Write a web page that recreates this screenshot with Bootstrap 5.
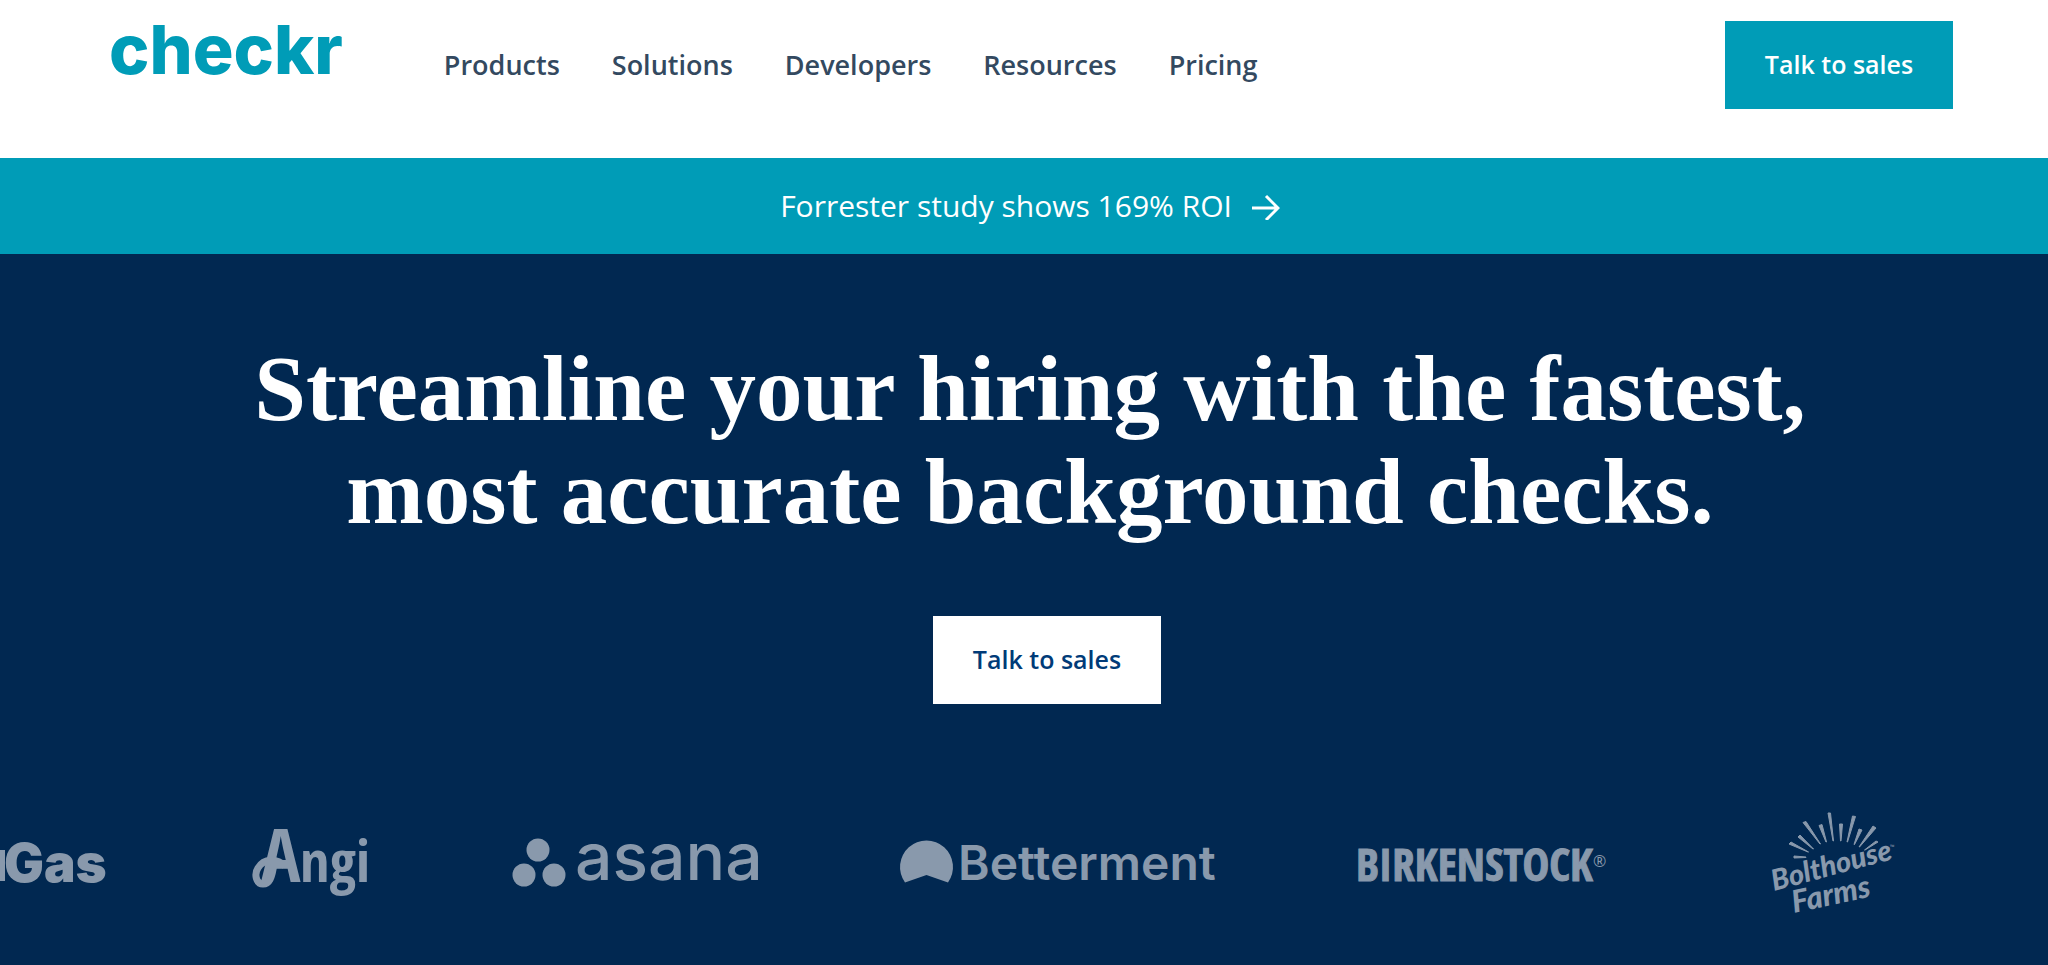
<!DOCTYPE html>
<html lang="en">
<head>
<meta charset="utf-8">
<meta name="viewport" content="width=device-width, initial-scale=1">
<title>Checkr</title>
<link rel="stylesheet" href="https://cdn.jsdelivr.net/npm/bootstrap@5.3.0/dist/css/bootstrap.min.css">
<style>
  :root { --teal: #009cb7; --navy: #012851; --ink: #334960; --haze: #8999ac; }
  body { font-family: "Open Sans", "Noto Sans", sans-serif; background: var(--navy); }
  .site-header { padding: 21px 95px 49px 109px; }
  .brand-word { font: 800 68px/56px Inter, sans-serif; color: var(--teal); margin-right: 101px; }
  .main-links { gap: 52px; }
  .main-links .nav-link { font-size: 27px; font-weight: 600; line-height: 36px; color: var(--ink); }
  .btn-sales { height: 88px; width: 228px; font-size: 25px; font-weight: 600; border: 0; }
  .btn-teal, .btn-teal:hover { background: var(--teal); color: #fff; }
  .btn-plain, .btn-plain:hover { background: #fff; color: #003b78; }
  .promo { background: var(--teal); height: 96px; padding-left: 12px; }
  .promo a { font-size: 30px; line-height: 40px; gap: 20px; }
  .hero { background: var(--navy); padding-top: 83px; }
  .hero h1 { font: 700 93px/103px "Liberation Serif", serif; padding-left: 12px; }
  .hero-action { margin-top: 73px; padding-left: 46px; }
  .logo-row { margin-top: 103px; gap: 142px; }
  .logo-row svg { fill: var(--haze); overflow: visible; }
</style>
</head>
<body class="min-vh-100 d-flex flex-column">
<header class="site-header bg-white d-flex align-items-start">
  <a class="brand-word text-decoration-none" href="#">checkr</a>
  <nav class="d-flex align-items-center align-self-center" aria-label="Main">
    <ul class="nav main-links">
      <li><a class="nav-link p-0" href="#">Products</a></li>
      <li><a class="nav-link p-0" href="#">Solutions</a></li>
      <li><a class="nav-link p-0" href="#">Developers</a></li>
      <li><a class="nav-link p-0" href="#">Resources</a></li>
      <li><a class="nav-link p-0" href="#">Pricing</a></li>
    </ul>
  </nav>
  <button class="btn btn-sales btn-teal rounded-0 ms-auto" type="button">Talk to sales</button>
</header>

<div class="promo d-flex align-items-center justify-content-center">
  <a class="text-white text-decoration-none d-flex align-items-center" href="#">Forrester study shows 169% ROI
    <svg width="28" height="28" viewBox="0 0 28 28" fill="none" stroke="#fff" stroke-width="3" aria-hidden="true"><path d="M0 16h26M14 4l12 12-12 12"/></svg>
  </a>
</div>

<main class="hero flex-grow-1 text-center overflow-hidden">
  <h1 class="text-white m-0">Streamline your hiring with the fastest,<br>most accurate background checks.</h1>
  <div class="hero-action">
    <button class="btn btn-sales btn-plain rounded-0" type="button">Talk to sales</button>
  </div>
  <div class="logo-row d-flex align-items-center">
    <svg class="flex-shrink-0" width="109" height="110" role="img" aria-label="Gas">
      <rect x="0" y="43" width="5" height="31"/>
      <text x="4" y="75" font-family="Inter" font-weight="900" font-size="53">Gas</text>
    </svg>
    <svg class="flex-shrink-0" width="118" height="110" role="img" aria-label="Angi">
      <text x="10" y="75" font-family="Open Sans Condensed" font-weight="700" font-size="74">A</text>
      <text x="49" y="75" font-family="Open Sans Condensed" font-weight="700" font-size="58">ngi</text>
      <path d="M23 56C21 72 18 77 12 77C5 77 3 67 7 61C13 51 26 51 34 59" fill="none" stroke="#8999ac" stroke-width="7"/>
    </svg>
    <svg class="flex-shrink-0" width="246" height="110" role="img" aria-label="asana">
      <circle cx="27" cy="43" r="11.5"/><circle cx="13" cy="68" r="11.5"/><circle cx="43" cy="68" r="11.5"/>
      <text x="64" y="73" font-family="Inter" font-weight="500" font-size="66">asana</text>
    </svg>
    <svg class="flex-shrink-0" width="318" height="110" role="img" aria-label="Betterment">
      <path d="M6 75.500A26.500 26.500 0 1 1 49 75.500L27.500 68Z"/>
      <text x="59" y="73" font-family="Inter" font-weight="600" font-size="48">Betterment</text>
    </svg>
    <svg class="flex-shrink-0" width="248" height="110" role="img" aria-label="Birkenstock">
      <text x="-3" y="74" font-family="Open Sans Condensed" font-weight="700" font-size="45" stroke="#8999ac" stroke-width="1">BIRKENSTOCK</text>
      <text x="234" y="60" font-family="Open Sans" font-size="16">®</text>
    </svg>
    <svg class="flex-shrink-0" width="150" height="110" role="img" aria-label="Bolthouse Farms">
      <g stroke="#8999ac" stroke-linejoin="round" stroke-width="1">
        <path d="M79 6L81.500 6L84.500 34L84 34Z"/><path d="M54 15.500L57 14.500L71.500 37L71 37Z"/>
        <path d="M70 18.500L73 17.500L77.500 35L77 35Z"/><path d="M90.500 17L93.500 17L92 34L91.500 34Z"/>
        <path d="M103.500 9L106.500 9.500L98.500 35L98 35Z"/><path d="M110 22L113 23L105.500 37.500L105 37.500Z"/>
        <path d="M124 19L127 21L110.500 40L110 40Z"/><path d="M127 34L129 35L116 43L115.500 43Z"/>
        <path d="M49 30L51 28L64.500 42L64 42Z"/><path d="M40 37L42 35L59.500 45L59 45Z"/><path d="M45 49L45 51L57 50.500L57 50Z"/>
      </g>
      <text transform="translate(25 84) rotate(-15)" font-family="Lato" font-style="italic" font-weight="900" font-size="29">Bolthouse</text>
      <text transform="translate(45 106) rotate(-12)" font-family="Lato" font-style="italic" font-weight="900" font-size="31">Farms</text>
      <text x="141" y="42" font-family="Open Sans" font-size="6">™</text>
    </svg>
  </div>
</main>
<script src="https://cdn.jsdelivr.net/npm/bootstrap@5.3.0/dist/js/bootstrap.bundle.min.js"></script>
</body>
</html>
